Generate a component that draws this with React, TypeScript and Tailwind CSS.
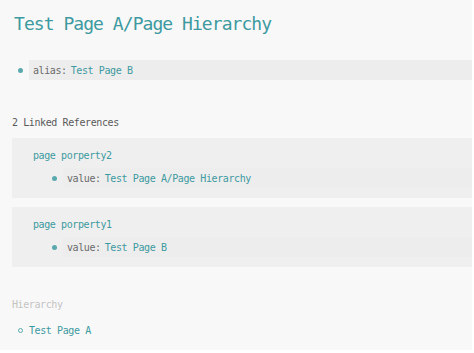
import React from 'react';

const mono = { fontFamily: '"DejaVu Sans Mono", "Liberation Mono", monospace' };

function Bullet() {
  return (
    <div className="flex w-[17px] shrink-0 items-center justify-center">
      <span className="block h-[5px] w-[5px] rounded-full bg-[#5aa9ad]" />
    </div>
  );
}

function PropRow({ name, value }: { name: string; value: string }) {
  return (
    <div className="flex h-[20px] items-center">
      <Bullet />
      <div className="flex h-full flex-1 items-center bg-[#ededed] pl-[4px] text-[10px] tracking-[-0.4px]">
        <span className="text-[#6b6b6b]">{name}:</span>
        <span className="ml-[4px] text-[#3d9aa0]">{value}</span>
      </div>
    </div>
  );
}

function RefCard({ title, value }: { title: string; value: string }) {
  return (
    <div className="h-[60px] bg-[#efefef] pt-[11px]">
      <div className="pl-[21px] text-[10px] leading-[14px] tracking-[-0.4px] text-[#3d9aa0]">{title}</div>
      <div className="mt-[5px] pl-[34px]">
        <PropRow name="value" value={value} />
      </div>
    </div>
  );
}

export default function App() {
  return (
    <div className="h-[353px] w-[474px] bg-white" style={mono}>
      <div className="h-[350px] w-[472px] bg-[#f8f8f8] pl-[12px] pt-[12px]">
        <h1 className="pl-[2px] text-[18px] leading-[24px] tracking-[-0.95px] text-[#3d9aa0]">
          Test Page A/Page Hierarchy
        </h1>
        <div className="mt-[24px]">
          <PropRow name="alias" value="Test Page B" />
        </div>
        <div className="mt-[36px] text-[10px] leading-[14px] tracking-[-0.4px] text-[#5a5a5a]">2 Linked References</div>
        <div className="mt-[8px] flex flex-col gap-[9px]">
          <RefCard title="page porperty2" value="Test Page A/Page Hierarchy" />
          <RefCard title="page porperty1" value="Test Page B" />
        </div>
        <div className="mt-[31px] text-[10px] leading-[14px] tracking-[-0.4px] text-[#c4c4c4]">Hierarchy</div>
        <div className="mt-[11px] flex items-center pl-[6px] text-[10px] tracking-[-0.4px]">
          <span className="mr-[6px] block h-[5px] w-[5px] rounded-full border border-[#5aa9ad]" />
          <span className="text-[#3d9aa0]">Test Page A</span>
        </div>
      </div>
    </div>
  );
}
